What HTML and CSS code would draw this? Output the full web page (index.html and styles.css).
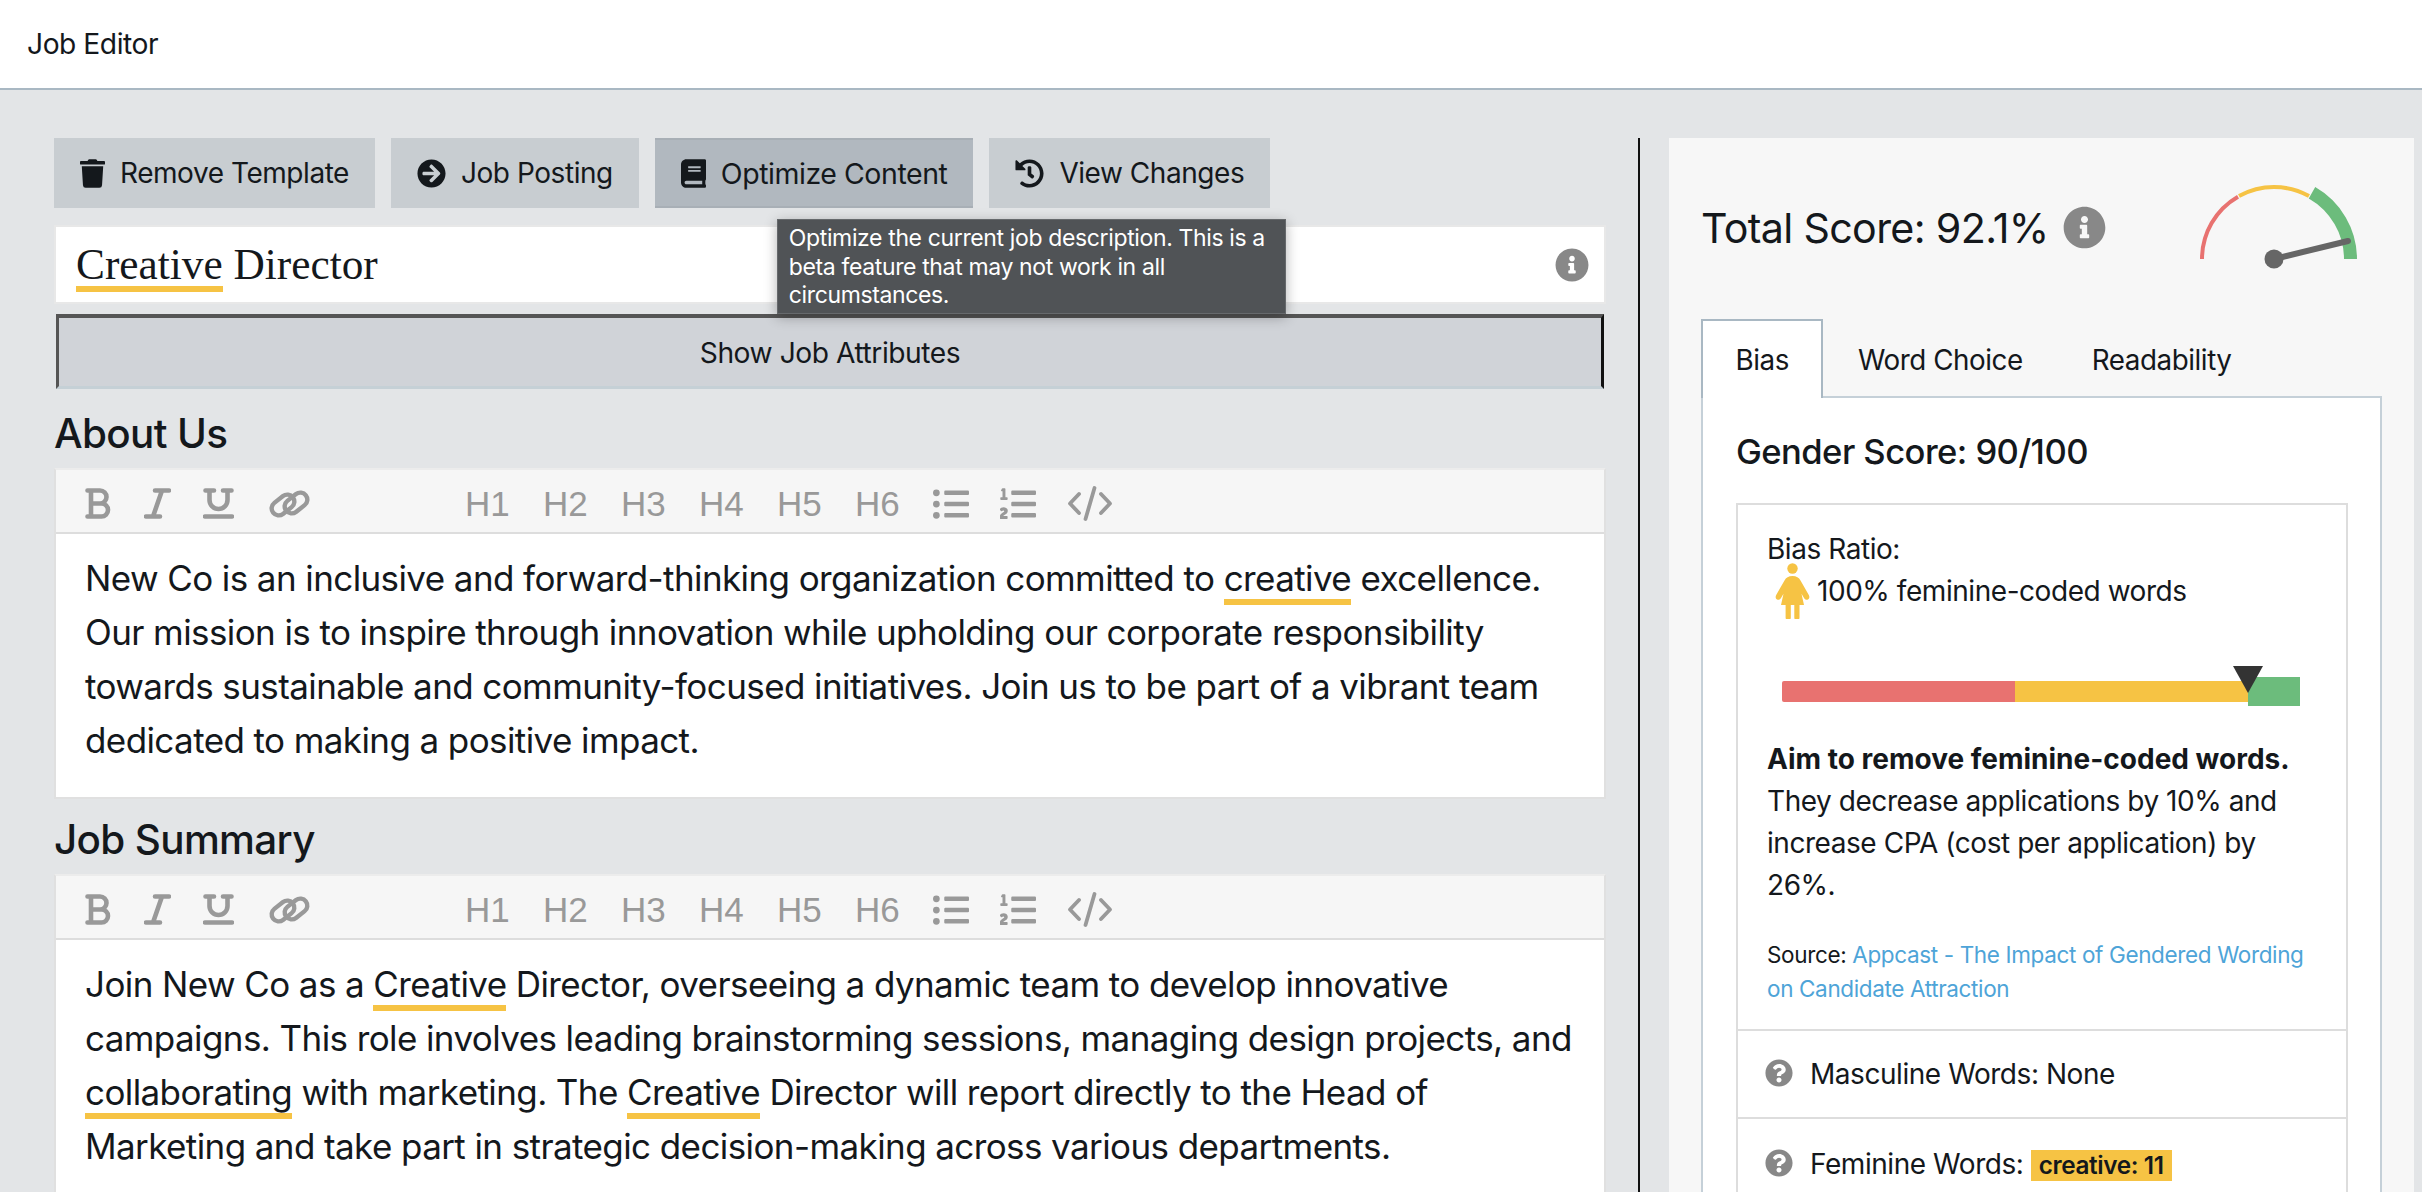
FILE: index.html
```html
<!DOCTYPE html>
<html lang="en">
<head>
<meta charset="utf-8">
<title>Job Editor</title>
<link rel="stylesheet" href="styles.css">
</head>
<body>
<svg class="defs" width="0" height="0" aria-hidden="true">
  <symbol id="i-info" viewBox="0 0 512 512"><path d="M256 8C119.043 8 8 119.083 8 256c0 136.997 111.043 248 248 248s248-111.003 248-248C504 119.083 392.957 8 256 8zm0 110c23.196 0 42 18.804 42 42s-18.804 42-42 42-42-18.804-42-42 18.804-42 42-42zm56 254c0 6.627-5.373 12-12 12h-88c-6.627 0-12-5.373-12-12v-24c0-6.627 5.373-12 12-12h12v-64h-12c-6.627 0-12-5.373-12-12v-24c0-6.627 5.373-12 12-12h64c6.627 0 12 5.373 12 12v100h12c6.627 0 12 5.373 12 12v24z"/></symbol>
  <symbol id="i-q" viewBox="0 0 512 512"><path d="M504 256c0 136.997-111.043 248-248 248S8 392.997 8 256C8 119.083 119.043 8 256 8s248 111.083 248 248zM262.655 90c-54.497 0-89.255 22.957-116.549 63.758-3.536 5.286-2.353 12.415 2.715 16.258l34.699 26.31c5.205 3.947 12.621 3.008 16.665-2.122 17.864-22.658 30.113-35.797 57.303-35.797 20.429 0 45.698 13.148 45.698 32.958 0 14.976-12.363 22.667-32.534 33.976C247.128 238.528 216 254.941 216 296v4c0 6.627 5.373 12 12 12h56c6.627 0 12-5.373 12-12v-1.333c0-28.462 83.186-29.647 83.186-106.667 0-58.002-60.165-102-116.531-102zM256 338c-25.365 0-46 20.635-46 46 0 25.364 20.635 46 46 46s46-20.636 46-46c0-25.365-20.635-46-46-46z"/></symbol>
  <symbol id="t-b" viewBox="0 0 27 31"><path d="M2.5 2.5H15a6.500 6.500 0 0 1 0 13H6M2.500 28.500H16.500a6.500 6.500 0 0 0 0-13H6M6 2.500V28.500" fill="none" stroke="currentColor" stroke-width="4.600" stroke-linecap="round" stroke-linejoin="round"/></symbol>
  <symbol id="t-i" viewBox="0 0 27 31"><path d="M11 2.500H25M2 28.500H16M18 2.500L9 28.500" fill="none" stroke="currentColor" stroke-width="4.600" stroke-linecap="round"/></symbol>
  <symbol id="t-u" viewBox="0 0 31 31"><path d="M2.500 2.500H11M20 2.500H28.500M6.500 2.500V12a9 9 0 0 0 18 0V2.500M2 28.500H29" fill="none" stroke="currentColor" stroke-width="4.600" stroke-linecap="round"/></symbol>
  <symbol id="t-link" viewBox="0 0 43 34"><g fill="none" stroke="currentColor" stroke-width="4.400"><rect x="2.500" y="11" width="25" height="14" rx="7" transform="rotate(-38 15 18)"/><rect x="15.500" y="9" width="25" height="14" rx="7" transform="rotate(-38 28 16)"/></g></symbol>
  <symbol id="t-ul" viewBox="0 0 512 512"><path d="M48 48a48 48 0 1 0 48 48 48 48 0 0 0-48-48zm0 160a48 48 0 1 0 48 48 48 48 0 0 0-48-48zm0 160a48 48 0 1 0 48 48 48 48 0 0 0-48-48zm448 16H176a16 16 0 0 0-16 16v32a16 16 0 0 0 16 16h320a16 16 0 0 0 16-16v-32a16 16 0 0 0-16-16zm0-320H176a16 16 0 0 0-16 16v32a16 16 0 0 0 16 16h320a16 16 0 0 0 16-16V80a16 16 0 0 0-16-16zm0 160H176a16 16 0 0 0-16 16v32a16 16 0 0 0 16 16h320a16 16 0 0 0 16-16v-32a16 16 0 0 0-16-16z"/></symbol>
  <symbol id="t-ol" viewBox="0 0 512 512"><path d="M496 224H176a16 16 0 0 0-16 16v32a16 16 0 0 0 16 16h320a16 16 0 0 0 16-16v-32a16 16 0 0 0-16-16zm0-160H176a16 16 0 0 0-16 16v32a16 16 0 0 0 16 16h320a16 16 0 0 0 16-16V80a16 16 0 0 0-16-16zm0 320H176a16 16 0 0 0-16 16v32a16 16 0 0 0 16 16h320a16 16 0 0 0 16-16v-32a16 16 0 0 0-16-16z"/><path transform="translate(-6 -8) scale(1.3)" d="M16 160h64a8 8 0 0 0 8-8v-16a8 8 0 0 0-8-8H64V40a8 8 0 0 0-8-8H32a8 8 0 0 0-7.140 4.420l-8 16A8 8 0 0 0 24 64h8v64H16a8 8 0 0 0-8 8v16a8 8 0 0 0 8 8z"/><path transform="translate(-6 52) scale(1.3)" d="M12.090 320H80a8 8 0 0 0 8-8v-16a8 8 0 0 0-8-8H41.320c3.290-10.290 48.340-18.680 48.340-56.440 0-29.060-25-39.560-44.470-39.560-21.360 0-33.800 10-40.460 18.750-4.370 5.590-3 10.840 2.800 15.370l8.580 6.880c5.610 4.560 11 2.470 16.120-2.440a13.440 13.440 0 0 1 9.460-3.840c3.330 0 9.280 1.560 9.280 8.750C51 248.190 0 257.310 0 304.590v4C0 316 5.080 320 12.090 320z"/></symbol>
  <symbol id="t-code" viewBox="0 0 46 35"><path d="M12 8L3 17.500L12 27M34 8L43 17.500L34 27M27.500 2L18.500 33" fill="none" stroke="currentColor" stroke-width="3.800" stroke-linecap="round" stroke-linejoin="round"/></symbol>
</svg>

<header class="topbar">Job Editor</header>

<main class="layout">
  <section class="editor">
    <div class="actions">
      <button class="action">
        <svg class="action-icon trash" viewBox="0 0 448 512"><path d="M432 32H312l-9.400-18.700A24 24 0 0 0 281.100 0H166.800a23.720 23.720 0 0 0-21.400 13.300L136 32H16A16 16 0 0 0 0 48v32a16 16 0 0 0 16 16h416a16 16 0 0 0 16-16V48a16 16 0 0 0-16-16zM53.200 467a48 48 0 0 0 47.900 45h245.800a48 48 0 0 0 47.900-45L416 128H32z"/></svg>
        Remove Template
      </button>
      <button class="action">
        <svg class="action-icon" viewBox="0 0 512 512"><path d="M256 8c137 0 248 111 248 248S393 504 256 504 8 393 8 256 119 8 256 8zm-28.900 143.600l75.500 72.400H120c-13.300 0-24 10.700-24 24v16c0 13.300 10.700 24 24 24h182.600l-75.500 72.400c-9.700 9.300-9.900 24.800-.4 34.300l11 10.900c9.400 9.400 24.600 9.400 33.900 0L404.300 273c9.400-9.400 9.400-24.600 0-33.900L271.600 106.300c-9.400-9.400-24.600-9.400-33.900 0l-11 10.900c-9.500 9.600-9.300 25.100.4 34.400z"/></svg>
        Job Posting
      </button>
      <div class="action-wrap">
        <button class="action is-active">
          <svg class="action-icon trash" viewBox="0 0 448 512"><path d="M448 360V24c0-13.300-10.700-24-24-24H96C43 0 0 43 0 96v320c0 53 43 96 96 96h328c13.300 0 24-10.700 24-24v-16c0-7.500-3.500-14.300-8.900-18.700-4.200-15.400-4.200-59.300 0-74.700 5.400-4.300 8.900-11.100 8.900-18.600zM128 134c0-3.300 2.700-6 6-6h212c3.300 0 6 2.700 6 6v20c0 3.300-2.700 6-6 6H134c-3.300 0-6-2.700-6-6v-20zm0 64c0-3.300 2.700-6 6-6h212c3.300 0 6 2.700 6 6v20c0 3.300-2.700 6-6 6H134c-3.300 0-6-2.700-6-6v-20zm253.400 250H96c-17.700 0-32-14.300-32-32 0-17.600 14.400-32 32-32h285.400c-1.900 17.100-1.900 46.900 0 64z"/></svg>
          Optimize Content
        </button>
        <div class="tooltip">Optimize the current job description. This is a beta feature that may not work in all circumstances.</div>
      </div>
      <button class="action">
        <svg class="action-icon" viewBox="0 0 512 512"><path d="M504 255.531c.253 136.640-111.180 248.372-247.820 248.468-59.015.042-113.223-20.530-155.822-54.911-11.077-8.940-11.905-25.541-1.839-35.607l11.267-11.267c8.609-8.609 22.353-9.551 31.891-1.984C173.062 425.135 212.781 440 256 440c101.705 0 184-82.311 184-184 0-101.705-82.311-184-184-184-48.814 0-93.149 18.969-126.068 49.932l50.754 50.754c10.080 10.080 2.941 27.314-11.313 27.314H24c-8.837 0-16-7.163-16-16V38.627c0-14.254 17.234-21.393 27.314-11.314l49.372 49.372C129.209 34.136 189.552 8 256 8c136.810 0 247.747 110.780 248 247.531zm-180.912 78.784l9.823-12.630c8.138-10.463 6.253-25.542-4.210-33.679L288 256.349V152c0-13.255-10.745-24-24-24h-16c-13.255 0-24 10.745-24 24v135.651l65.409 50.874c10.463 8.137 25.541 6.253 33.679-4.210z"/></svg>
        View Changes
      </button>
    </div>

    <div class="title-box">
      <span class="title"><span class="flag">Creative</span> Director</span>
      <svg class="title-info"><use href="#i-info"/></svg>
    </div>

    <button class="attrs">Show Job Attributes</button>

    <h2 class="section-title first">About Us</h2>
    <div class="rich">
      <div class="toolbar">
        <div class="tool-group">
          <svg class="tool t-b"><use href="#t-b"/></svg>
          <svg class="tool t-i"><use href="#t-i"/></svg>
          <svg class="tool t-u"><use href="#t-u"/></svg>
          <svg class="tool t-link"><use href="#t-link"/></svg>
        </div>
        <div class="tool-heads"><span>H1</span><span>H2</span><span>H3</span><span>H4</span><span>H5</span><span>H6</span></div>
        <svg class="tool t-list"><use href="#t-ul"/></svg>
        <svg class="tool t-list"><use href="#t-ol"/></svg>
        <svg class="tool t-code"><use href="#t-code"/></svg>
      </div>
      <div class="rich-body">New Co is an inclusive and forward-thinking organization committed to <span class="flag">creative</span> excellence. Our mission is to inspire through innovation while upholding our corporate responsibility towards sustainable and community-focused initiatives. Join us to be part of a vibrant team dedicated to making a positive impact.</div>
    </div>

    <h2 class="section-title">Job Summary</h2>
    <div class="rich">
      <div class="toolbar">
        <div class="tool-group">
          <svg class="tool t-b"><use href="#t-b"/></svg>
          <svg class="tool t-i"><use href="#t-i"/></svg>
          <svg class="tool t-u"><use href="#t-u"/></svg>
          <svg class="tool t-link"><use href="#t-link"/></svg>
        </div>
        <div class="tool-heads"><span>H1</span><span>H2</span><span>H3</span><span>H4</span><span>H5</span><span>H6</span></div>
        <svg class="tool t-list"><use href="#t-ul"/></svg>
        <svg class="tool t-list"><use href="#t-ol"/></svg>
        <svg class="tool t-code"><use href="#t-code"/></svg>
      </div>
      <div class="rich-body">Join New Co as a <span class="flag">Creative</span> Director, overseeing a dynamic team to develop innovative campaigns. This role involves leading brainstorming sessions, managing design projects, and <span class="flag">collaborating</span> with marketing. The <span class="flag">Creative</span> Director will report directly to the Head of Marketing and take part in strategic decision-making across various departments.</div>
    </div>
  </section>

  <aside class="score">
    <div class="score-head">
      <div class="score-total">Total Score: 92.1%<svg class="score-info"><use href="#i-info"/></svg></div>
      <svg class="gauge" viewBox="0 0 192 181">
        <path d="M12 121A72 72 0 0 1 48 58.650" fill="none" stroke="#e87270" stroke-width="4"/>
        <path d="M49 58.100A72 72 0 0 1 119 58.100" fill="none" stroke="#f6c344" stroke-width="4"/>
        <path d="M122 54.750A76.500 76.500 0 0 1 160.500 121" fill="none" stroke="#6cbc7c" stroke-width="13"/>
        <path d="M84 121L158 103" stroke="#666" stroke-width="6" stroke-linecap="round"/>
        <circle cx="84" cy="121" r="9.500" fill="#666"/>
      </svg>
    </div>
    <nav class="tabs">
      <div class="tab is-active">Bias</div>
      <div class="tab">Word Choice</div>
      <div class="tab">Readability</div>
    </nav>
    <div class="tab-panel">
      <h3 class="gender">Gender Score: 90/100</h3>
      <div class="bias-box">
        <div class="bias-main">
          <div>Bias Ratio:</div>
          <div class="ratio-line">
            <svg class="figure" viewBox="0 0 35 56"><circle cx="17.500" cy="5.500" r="5.200"/><path d="M17.500 13c4 0 6.500 1.500 8 4.500l8.300 14.500c1 1.800.6 3.600-.8 4.400-1.500.8-3.100.2-4-1.400l-2.500-4.300 2.500 11.300h-4.500v12.500c0 4-5.200 4-5.200 0V42h-3.500v12.500c0 4-5.200 4-5.200 0V42H6l2.500-11.300-2.500 4.300c-.9 1.600-2.500 2.200-4 1.400-1.400-.8-1.800-2.600-.8-4.400L9.500 17.500c1.500-3 4-4.500 8-4.500z"/></svg>
            100% feminine-coded words
          </div>
          <div class="bar">
            <span class="seg seg-red"></span><span class="seg seg-yellow"></span><span class="seg seg-green"></span>
            <span class="bar-mark"></span>
          </div>
          <p class="advice"><strong>Aim to remove feminine-coded words.</strong> They decrease applications by 10% and increase CPA (cost per application) by 26%.</p>
          <p class="source">Source: <a href="#">Appcast - The Impact of Gendered Wording on Candidate Attraction</a></p>
        </div>
        <div class="word-row masc"><svg class="q"><use href="#i-q"/></svg>Masculine Words: None</div>
        <div class="word-row fem"><svg class="q"><use href="#i-q"/></svg>Feminine Words: <span class="badge">creative: 11</span><span class="badge">collaborating: 1</span><span class="badge">community: 1</span></div>
      </div>
    </div>
  </aside>
</main>
</body>
</html>
```
FILE: styles.css
```css
* { box-sizing: border-box; letter-spacing: -0.016em; }
html, body { margin: 0; height: 1192px; overflow: hidden; }
body {
  background: #e3e5e7;
  color: #14181c;
  font-family: Inter, "Liberation Sans", sans-serif;
  font-size: 28px;
}
.defs { position: absolute; }
.topbar {
  height: 90px;
  background: #fff;
  border-bottom: 2px solid #a9b8c3;
  padding: 0 27px;
  display: flex;
  align-items: center;
  font-size: 28.200px;
}
.layout { display: flex; height: 1102px; padding-top: 48px; }
.editor { width: 1638px; padding: 0 32px 0 54px; flex-shrink: 0; }
.actions { display: flex; gap: 16px; height: 70px; }
.action-wrap { position: relative; }
.action {
  height: 70px;
  border: 0;
  background: #c8cdd1;
  color: inherit;
  font: inherit;
  font-size: 28px;
  padding: 0 26px;
  display: flex;
  align-items: center;
  gap: 15px;
  white-space: nowrap;
}
.action.is-active { background: #b1b8bf; border-top: 2px solid #a8afb6; border-bottom: 2px solid #a8afb6; font-size: 28.500px; }
.action-icon { width: 29px; height: 29px; fill: #14181c; flex-shrink: 0; }
.action-icon.trash { width: 25px; }
.tooltip {
  position: absolute;
  left: 122px;
  top: 81px;
  width: 509px;
  height: 95px;
  z-index: 5;
  background: #505356;
  border: 1px solid #66696c;
  box-shadow: 0 3px 12px rgba(0,0,0,.3);
  color: #fff;
  font-size: 23px;
  line-height: 28.500px;
  padding: 4px 11px;
}
.title-box {
  height: 79px;
  margin-top: 17px;
  background: #fff;
  border: 2px solid #e8e8e8;
  padding: 2px 20px 0;
  display: flex;
  align-items: center;
  justify-content: space-between;
}
.title { font-family: "Liberation Serif", serif; font-size: 43.300px; line-height: 50px; }
.title, .title .flag { letter-spacing: 0; }
.title .flag { display: inline-block; line-height: 44px; }
.title-info { width: 34px; height: 34px; fill: #888; margin-right: -5px; margin-top: -2px; }
.flag { border-bottom: 6px solid #f6c344; }
.attrs {
  display: block;
  width: 1548px;
  height: 75px;
  margin: 10px 2px 0;
  padding-top: 3px;
  background: #d0d3d8;
  color: inherit;
  font: inherit;
  font-size: 28.200px;
  border-style: solid;
  border-width: 4px 3px 3px 3px;
  border-color: #555 #111 #c5d0d6 #555;
}
.section-title { margin: 19px 0 12px; font-size: 40.400px; line-height: 44px; font-weight: 500; }
.section-title.first { margin-top: 23px; }
.rich { background: #fff; border: 2px solid #e0e0e0; border-top-color: #ececec; }
.toolbar {
  height: 64px;
  background: #f6f6f6;
  border-bottom: 2px solid #ddd;
  color: #999;
  display: flex;
  align-items: center;
  padding: 5px 0 0 29px;
}
.tool { display: block; fill: currentColor; flex-shrink: 0; }
.tool-group { display: flex; align-items: center; width: 380px; }
.t-b { width: 27px; height: 31px; margin-right: 32px; }
.t-i { width: 27px; height: 31px; margin-right: 32px; }
.t-u { width: 31px; height: 31px; margin-right: 34px; }
.t-link { width: 43px; height: 34px; }
.tool-heads { display: flex; font-family: "Liberation Sans", sans-serif; font-size: 35px; line-height: 44px; }
.tool-heads span { width: 78px; letter-spacing: 0; }
.t-list { width: 36px; height: 36px; margin-right: 31px; }
.t-code { width: 46px; height: 35px; }
.rich-body { padding: 17px 29px 30px; font-size: 35px; line-height: 54px; letter-spacing: -0.595px; }
.rich-body .flag { letter-spacing: -0.595px; }
.score {
  flex: 0 0 775px;
  border-left: 2px solid #111;
  padding-left: 29px;
}
.score-head {
  display: flex;
  justify-content: space-between;
  align-items: center;
  height: 181px;
  background: #f7f7f7;
  padding: 0 32px 0 32px;
  width: 745px;
}
.score-total { display: flex; align-items: center; gap: 14px; font-size: 41.200px; margin-top: -2px; }
.score-info { width: 43px; height: 43px; fill: #888; }
.gauge { width: 192px; height: 181px; }
.tabs { display: flex; width: 745px; background: #f7f7f7; padding: 0 32px; height: 77px; position: relative; }
.tab {
  padding: 0 32.500px;
  height: 79px;
  display: flex;
  align-items: center;
  border: 2px solid transparent;
  border-bottom: 0;
  font-size: 27.800px;
  position: relative;
  z-index: 1;
}
.tab.is-active { background: #fff; border-color: #a9b8c3; }
.tab-panel {
  width: 745px;
  height: 800px;
  background: #f7f7f7;
  padding: 0 32px;
}
.gender {
  margin: 0;
  font-size: 34.600px;
  font-weight: 500;
  line-height: 107px;
  height: 107px;
  background: #fff;
  border: 2px solid #c5d0d8;
  border-bottom: 0;
  padding-left: 33px;
}
.bias-box {
  background: #fff;
  border: 2px solid #c5d0d8;
  border-top: 0;
  padding: 0 32px 0 33px;
  height: 700px;
}
.bias-main { border: 2px solid #ddd; border-bottom: 0; padding: 23px 29px 23px; line-height: 42px; }
.ratio-line { display: flex; align-items: center; height: 42px; gap: 7px; }
.figure { width: 35px; height: 56px; margin-left: 8px; fill: #f6c344; flex-shrink: 0; }
.bar { position: relative; display: flex; align-items: center; height: 29px; width: 518px; margin: 65px 0 0 15px; }
.seg { display: block; height: 21px; }
.seg-red { width: 233px; background: #e87270; border-radius: 2px 0 0 2px; }
.seg-yellow { width: 233px; background: #f6c344; }
.seg-green { width: 52px; height: 29px; background: #6cbc7c; }
.bar-mark {
  position: absolute;
  left: 451px;
  top: -11px;
  width: 0;
  height: 0;
  border-style: solid;
  border-width: 27px 15.500px 0;
  border-color: #333 transparent transparent;
}
.advice { margin: 32px 0 0; }
.advice strong { font-weight: 700; font-size: 28px; letter-spacing: 0; }
.source { margin: 32px 0 0; font-size: 22.500px; line-height: 34px; }
.source a { color: #4ea4d8; text-decoration: none; }
.word-row { border: 2px solid #ddd; border-bottom: 0; padding: 0 27px; line-height: 42px; }
.masc { height: 88px; display: flex; align-items: center; }
.masc .q { margin-top: -2px; }
.fem { padding-top: 24px; padding-bottom: 40px; }
.q { width: 28px; height: 28px; fill: #888; margin-right: 17px; vertical-align: -3px; flex-shrink: 0; }
.badge {
  display: inline-block;
  background: #f6c344;
  font-size: 24.300px;
  font-weight: 600;
  line-height: 31px;
  padding: 0 8px;
  margin-right: 10px;
}
```
